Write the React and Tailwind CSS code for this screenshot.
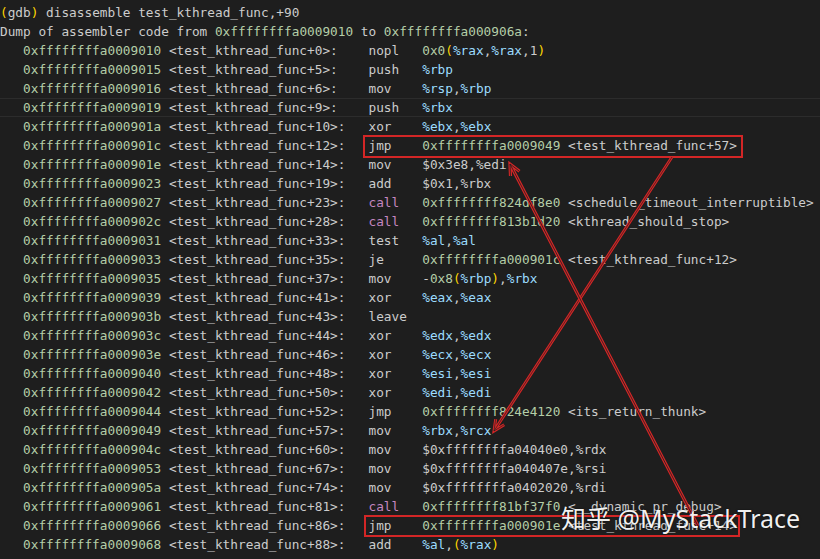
import React from "react";

const C = {
  text: "text-[#cccccc]",
  addr: "text-[#b5cea8]",
  reg: "text-[#9cdcfe]",
  paren: "text-[#ffd700]",
  call: "text-[#c586c0]",
};

const rows = [
  ["10", "+0", "nopl", "0x0(%rax,%rax,1)"],
  ["15", "+5", "push", "%rbp"],
  ["16", "+6", "mov", "%rsp,%rbp"],
  ["19", "+9", "push", "%rbx"],
  ["1a", "+10", "xor", "%ebx,%ebx"],
  ["1c", "+12", "jmp", "0xffffffffa0009049", "<test_kthread_func+57>"],
  ["1e", "+14", "mov", "$0x3e8,%edi"],
  ["23", "+19", "add", "$0x1,%rbx"],
  ["27", "+23", "call", "0xffffffff824df8e0", "<schedule_timeout_interruptible>"],
  ["2c", "+28", "call", "0xffffffff813b1d20", "<kthread_should_stop>"],
  ["31", "+33", "test", "%al,%al"],
  ["33", "+35", "je", "0xffffffffa000901c", "<test_kthread_func+12>"],
  ["35", "+37", "mov", "-0x8(%rbp),%rbx"],
  ["39", "+41", "xor", "%eax,%eax"],
  ["3b", "+43", "leave", ""],
  ["3c", "+44", "xor", "%edx,%edx"],
  ["3e", "+46", "xor", "%ecx,%ecx"],
  ["40", "+48", "xor", "%esi,%esi"],
  ["42", "+50", "xor", "%edi,%edi"],
  ["44", "+52", "jmp", "0xffffffff824e4120", "<its_return_thunk>"],
  ["49", "+57", "mov", "%rbx,%rcx"],
  ["4c", "+60", "mov", "$0xffffffffa04040e0,%rdx"],
  ["53", "+67", "mov", "$0xffffffffa040407e,%rsi"],
  ["5a", "+74", "mov", "$0xffffffffa0402020,%rdi"],
  ["61", "+81", "call", "0xffffffff81bf37f0", "<__dynamic_pr_debug>"],
  ["66", "+86", "jmp", "0xffffffffa000901e", "<test_kthread_func+14>"],
  ["68", "+88", "add", "%al,(%rax)"],
];

function Operand({ value }) {
  if (value.includes("$")) return <span className={C.text}>{value}</span>;
  const parts = value.split(/(%[a-z0-9]+|[()]|0x[0-9a-f]+)/).filter(Boolean);
  return parts.map((p, i) => {
    let cls = C.text;
    if (p.startsWith("%")) cls = C.reg;
    else if (p === "(" || p === ")") cls = C.paren;
    else if (p.startsWith("0x")) cls = C.addr;
    return (
      <span key={i} className={cls}>
        {p}
      </span>
    );
  });
}

function Line({ row, hl }) {
  const [lo, off, op, arg, sym] = row;
  const label = `<test_kthread_func${off}>:`;
  const head = `   0xffffffffa00090${lo} ${label}`;
  const pad = " ".repeat(Math.max(1, 48 - head.length));
  return (
    <div
      className={`h-[19px] whitespace-pre ${
        hl ? "border-y border-[#2c2c2c] leading-[17px]" : "leading-[19px]"
      }`}
    >
      <span>{"   "}</span>
      <span className={C.addr}>{`0xffffffffa00090${lo}`}</span>
      <span className={C.text}>{` ${label}${pad}`}</span>
      <span className={op === "call" ? C.call : C.text}>
        {arg ? op.padEnd(6, " ") + " " : op}
      </span>
      {arg && <Operand value={arg} />}
      {sym && <span className={C.text}>{" " + sym}</span>}
    </div>
  );
}

function Overlay() {
  const red = "#d32626";
  const bg = "#1e1e1e";
  const arrowA = "M672 157 L494 431 M504.2 424.7 L494 431 L495.7 419.1";
  const arrowB = "M698 526 L510 164 M510.5 176 L510 164 L519.5 171.3";
  return (
    <svg
      className="absolute inset-0 pointer-events-none"
      width="820"
      height="559"
      viewBox="0 0 820 559"
    >
      <rect x="364" y="136" width="378" height="21" fill="none" stroke={red} strokeWidth="2" />
      <rect x="365" y="516" width="374" height="20" fill="none" stroke={red} strokeWidth="2" />
      <path d={arrowA} fill="none" stroke={red} strokeWidth="3" strokeLinejoin="miter" />
      <path d={arrowA} fill="none" stroke={bg} strokeWidth="0.8" strokeOpacity="0.8" />
      <path d={arrowB} fill="none" stroke={red} strokeWidth="3.2" strokeLinejoin="miter" />
      <path d={arrowB} fill="none" stroke={bg} strokeWidth="1" strokeOpacity="0.8" />
    </svg>
  );
}

export default function App() {
  return (
    <div className="relative w-[820px] h-[559px] overflow-hidden bg-[#1e1e1e]">
      <div className="pt-[3px] text-[12.75px] text-[#cccccc] font-['DejaVu_Sans_Mono',monospace]">
        <div className="h-[19px] leading-[19px] whitespace-pre">
          <span className={C.paren}>(</span>
          <span>gdb</span>
          <span className={C.paren}>)</span>
          <span> disassemble test_kthread_func,+90</span>
        </div>
        <div className="h-[19px] leading-[19px] whitespace-pre">
          <span>Dump of assembler code from </span>
          <span className={C.addr}>0xffffffffa0009010</span>
          <span> to </span>
          <span className={C.addr}>0xffffffffa000906a</span>
          <span>:</span>
        </div>
        {rows.map((r, i) => (
          <Line key={i} row={r} hl={i === 3} />
        ))}
      </div>

      <Overlay />

      <div className="absolute left-[561px] top-[506px] text-[25px] leading-[25px] text-white/95 whitespace-pre font-['Noto_Sans','Noto_Sans_CJK_SC',sans-serif] [text-shadow:0_0_2px_rgba(0,0,0,0.6)]">
        知乎 @MyStackTrace
      </div>
    </div>
  );
}
